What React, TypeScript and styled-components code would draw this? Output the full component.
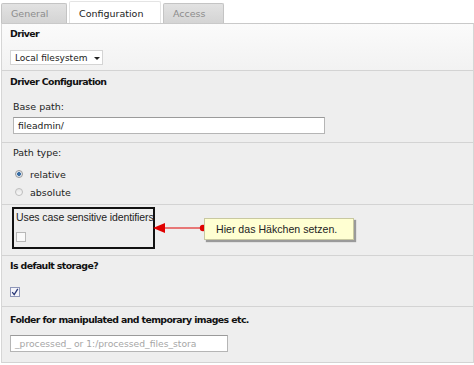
import React from "react";
import styled, { createGlobalStyle } from "styled-components";

const GlobalStyle = createGlobalStyle`
  html, body {
    margin: 0;
    padding: 0;
    background: #ffffff;
  }
  body {
    font-family: "DejaVu Sans", Verdana, sans-serif;
    font-size: 9px;
    color: #222;
  }
`;

const Page = styled.div`
  width: 474px;
  height: 365px;
  overflow: hidden;
`;

const TabBar = styled.div`
  display: flex;
  align-items: flex-end;
  gap: 2px;
  height: 23px;
  padding-left: 1px;
`;

const Tab = styled.div<{ $active?: boolean; $width: number }>`
  box-sizing: border-box;
  height: ${(p) => (p.$active ? "22px" : "20px")};
  width: ${(p) => p.$width}px;
  padding: ${(p) => (p.$active ? "6px" : "4px")} 0 0 9px;
  font-size: 9.5px;
  color: ${(p) => (p.$active ? "#222" : "#8c8c8c")};
  background: ${(p) =>
    p.$active ? "#ffffff" : "linear-gradient(#e2e2e2, #d4d4d4)"};
  border: 1px solid ${(p) => (p.$active ? "#e4e4e4" : "#c4c4c4")};
  border-bottom: none;
  border-radius: 2px 2px 0 0;
`;

const Panel = styled.div`
  border-top: 1px solid #c9c9c9;
  border-left: 1px solid #d6d6d6;
  border-right: 1px solid #d6d6d6;
  margin: 0 0 0 1px;
`;

const Section = styled.div<{ $top: number; $bottom: number; $light?: boolean }>`
  position: relative;
  padding: ${(p) => p.$top}px 10px ${(p) => p.$bottom}px 8px;
  background: ${(p) =>
    p.$light ? "linear-gradient(#fbfbfb, #f2f2f2)" : "#eeeeee"};
  border-bottom: 1px solid #d3d3d3;
`;

const Heading = styled.div`
  font-weight: bold;
  font-size: 9.4px;
  letter-spacing: -0.6px;
  line-height: 12px;
  color: #111;
`;

const Field = styled.div<{ $mt?: number }>`
  padding-left: 3px;
  margin-top: ${(p) => p.$mt ?? 0}px;
`;

const Label = styled.div`
  font-size: 9.5px;
  line-height: 12px;
  color: #222;
`;

const FakeSelect = styled.div`
  box-sizing: border-box;
  display: flex;
  align-items: center;
  gap: 7px;
  width: 93px;
  height: 15px;
  margin-top: 10px;
  padding-left: 4px;
  background: #fff;
  border: 1px solid #d4d4d4;
  color: #222;
`;

const Caret = styled.span`
  width: 0;
  height: 0;
  border-left: 3px solid transparent;
  border-right: 3px solid transparent;
  border-top: 3px solid #222;
  margin-top: 1px;
`;

const TextInput = styled.div<{ $width: number; $placeholder?: boolean }>`
  box-sizing: border-box;
  width: ${(p) => p.$width}px;
  height: 17px;
  padding: 2px 0 0 4px;
  background: #fff;
  border: 1px solid #b5b5b5;
  border-top-color: #9a9a9a;
  color: ${(p) => (p.$placeholder ? "#a6a6a6" : "#222")};
  font-size: 9.2px;
  line-height: 12px;
  white-space: nowrap;
  overflow: hidden;
`;

const RadioRow = styled.div`
  display: flex;
  align-items: center;
  gap: 7px;
  height: 18px;
  padding-left: 2px;
  font-size: 9.5px;
`;

const RadioDot = styled.span<{ $checked?: boolean }>`
  box-sizing: border-box;
  width: 8px;
  height: 8px;
  border-radius: 50%;
  border: 1px solid ${(p) => (p.$checked ? "#9a9a9a" : "#bdbdbd")};
  background: ${(p) =>
    p.$checked
      ? "radial-gradient(circle, #3a6ea5 0 1.6px, #dfe6ee 2.2px)"
      : "linear-gradient(#e6e6e6, #f8f8f8)"};
`;

const HighlightBox = styled.div`
  box-sizing: border-box;
  width: 143px;
  height: 42px;
  margin-left: 2px;
  padding: 2px 0 0 2px;
  border: 2px solid #111;
  background: #eeeeee;
`;

const BoxLabel = styled.div`
  font-family: "Liberation Sans", Arial, sans-serif;
  font-size: 10.5px;
  letter-spacing: -0.1px;
  line-height: 12px;
  color: #222;
  white-space: nowrap;
`;

const Check = styled.span<{ $mt: number }>`
  display: block;
  box-sizing: border-box;
  width: 10px;
  height: 10px;
  margin-top: ${(p) => p.$mt}px;
  background: #fafafa;
  border: 1px solid #b8b8b8;
`;

const CheckedBox = styled.span`
  display: flex;
  align-items: center;
  justify-content: center;
  box-sizing: border-box;
  width: 10px;
  height: 10px;
  margin: 15px 0 0 0;
  background: #f4f4fa;
  border: 1px solid #8e96b8;
`;

const Pointer = styled.svg`
  position: absolute;
  left: 151px;
  top: 17px;
`;

const Tooltip = styled.div`
  position: absolute;
  left: 202px;
  top: 13px;
  box-sizing: border-box;
  width: 150px;
  height: 22px;
  padding-left: 11px;
  display: flex;
  align-items: center;
  background: #ffffd2;
  border: 1px solid #c8c8a0;
  box-shadow: 2px 2px 1px #9a9a9a;
  font-family: "Liberation Sans", Arial, sans-serif;
  font-size: 10.6px;
  color: #222;
`;

export default function App() {
  return (
    <Page>
      <GlobalStyle />
      <TabBar>
        <Tab $width={66}>General</Tab>
        <Tab $width={92} $active>
          Configuration
        </Tab>
        <Tab $width={61}>Access</Tab>
      </TabBar>
      <Panel>
        <Section $top={4} $bottom={5} $light>
          <Heading>Driver</Heading>
          <FakeSelect>
            Local filesystem <Caret />
          </FakeSelect>
        </Section>

        <Section $top={5} $bottom={8}>
          <Heading>Driver Configuration</Heading>
          <Field $mt={13}>
            <Label>Base path:</Label>
            <div style={{ height: 4 }} />
            <TextInput $width={312}>fileadmin/</TextInput>
          </Field>
        </Section>

        <Section $top={4} $bottom={3}>
          <Field>
            <Label>Path type:</Label>
            <div style={{ height: 6 }} />
            <RadioRow>
              <RadioDot $checked /> relative
            </RadioRow>
            <RadioRow>
              <RadioDot /> absolute
            </RadioRow>
          </Field>
        </Section>

        <Section $top={2} $bottom={6}>
          <HighlightBox>
            <BoxLabel>Uses case sensitive identifiers</BoxLabel>
            <Check $mt={9} />
          </HighlightBox>
          <Pointer width="56" height="12" viewBox="0 0 56 12">
            <polygon points="0,6 12,1 12,11" fill="#e00000" />
            <line x1="11" y1="6" x2="50" y2="6" stroke="#e00000" strokeWidth="1" />
            <circle cx="50" cy="6" r="3.2" fill="#e00000" />
          </Pointer>
          <Tooltip>Hier das Häkchen setzen.</Tooltip>
        </Section>

        <Section $top={4} $bottom={9}>
          <Heading>Is default storage?</Heading>
          <CheckedBox>
            <svg width="8" height="8" viewBox="0 0 8 8">
              <path d="M1.2 4.2 L3.2 6.6 L6.8 0.8" stroke="#2c3a78" strokeWidth="1.3" fill="none" />
            </svg>
          </CheckedBox>
        </Section>

        <Section $top={7} $bottom={10}>
          <Heading>Folder for manipulated and temporary images etc.</Heading>
          <div style={{ height: 9 }} />
          <TextInput $width={218} $placeholder>
            _processed_ or 1:/processed_files_stora
          </TextInput>
        </Section>
      </Panel>
    </Page>
  );
}
